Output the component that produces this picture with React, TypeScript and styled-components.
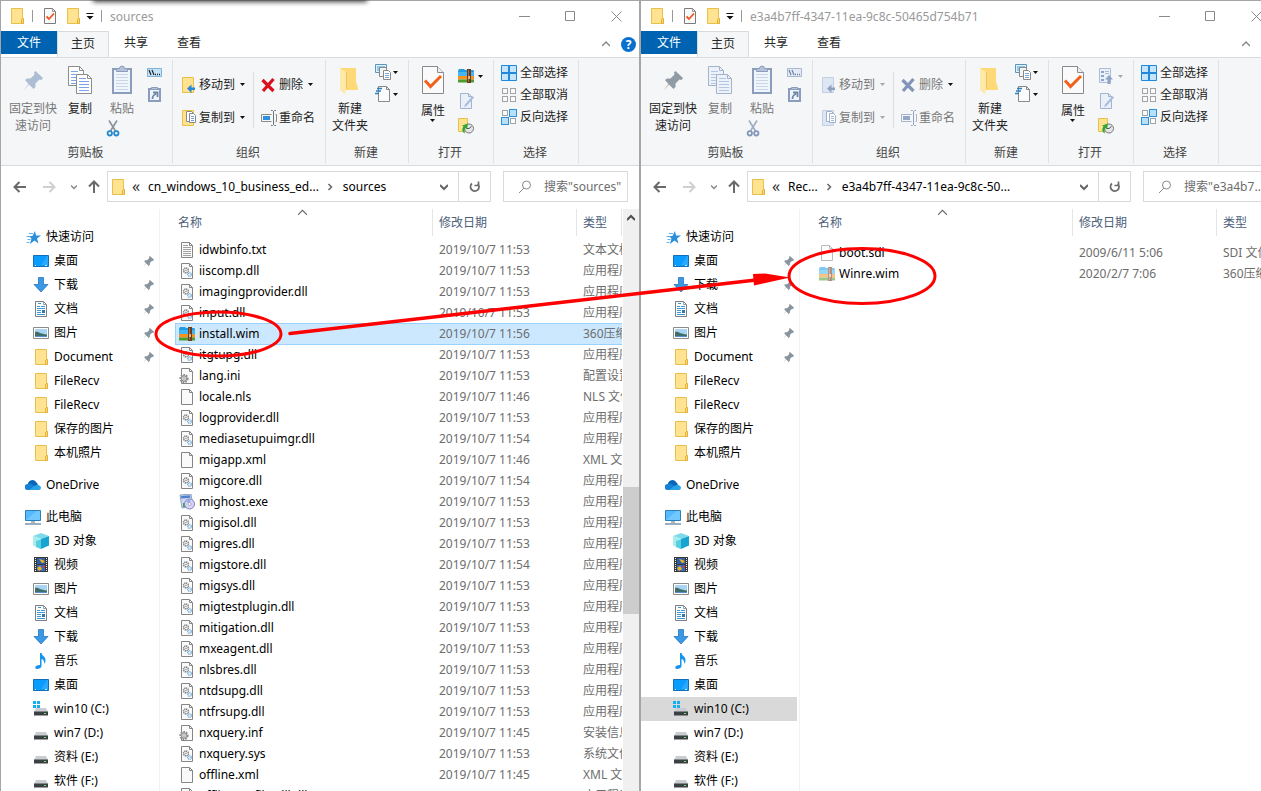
import React from "react";
import styled, { createGlobalStyle, css } from "styled-components";

const GlobalStyle = createGlobalStyle`
  * { box-sizing: border-box; }
  html, body { margin: 0; overflow: hidden; background: #fff; }
  body, button, input {
    font-family: "Noto Sans", "Noto Sans CJK SC", sans-serif;
    font-size: 12px;
    line-height: 17px;
    color: #000;
  }
  button { border: 0; background: none; padding: 0; margin: 0; }
  a { color: inherit; text-decoration: none; }
  svg { display: block; flex: none; }
`;

/* ---------- icons ---------- */

type IconProps = { off?: boolean };

const FolderIcon = () => (
  <svg width="16" height="16" viewBox="0 0 16 16">
    <path d="M2.5.5h11v10h1v5h-12z" fill="#ffe391" stroke="#e8c04a" />
    <path d="M12.5 15.5v-4l1-1h1v5z" fill="#ffd968" stroke="#e0b23c" />
  </svg>
);

const CheckPageIcon = () => (
  <svg width="16" height="16" viewBox="0 0 16 16">
    <path d="M2.5.5h8l3 3v12h-11z" fill="#fafafa" stroke="#7b7b7b" />
    <path d="M10.500.5v3h3" fill="none" stroke="#9a9a9a" />
    <path d="M4.500 8.500l2.500 2.500L12 5.500" fill="none" stroke="#f0541e" strokeWidth="1.800" />
  </svg>
);

const PropertiesIcon = () => (
  <svg width="22" height="30" viewBox="0 0 22 30">
    <path d="M.5 1.500h15l6 6v21h-21z" fill="#fafafa" stroke="#8a8a8a" />
    <path d="M15.500 1.500v6h6" fill="#ededed" stroke="#8a8a8a" />
    <path d="M3 15.500l5.500 6L19 11" fill="none" stroke="#f2601d" strokeWidth="3" />
  </svg>
);

const PinShape = "M12.500 0L20 7l-1.500 2-2-.5-4 4v3.500l-2 2-4.500-4.500L0 20l5.500-7L2 9l2-1.500h3.500l4-4-.5-2z";

const BigPinIcon = ({ off }: IconProps) => (
  <svg width="20" height="30" viewBox="0 -6 20 30">
    <path d={PinShape} fill={off ? "#adbdd3" : "#919ba3"} />
  </svg>
);

const SmallPinIcon = () => (
  <svg width="11" height="11" viewBox="0 0 20 20">
    <path d={PinShape} fill="#87939d" />
  </svg>
);

const CopyIcon = ({ off }: IconProps) => {
  const edge = off ? "#a4b3cc" : "#8c8c8c";
  const line = off ? "#b5c6e2" : "#7aa5e6";
  const paper = off ? "#edf2fa" : "#fff";
  return (
    <svg width="24" height="30" viewBox="0 0 24 30">
      <path d="M.5 1.500h11l4 4v15H.5z" fill={paper} stroke={edge} />
      <path d="M11.500 1.500v4h4" fill="none" stroke={edge} />
      <path d="M3 6.500h7M3 9.500h10M3 12.500h10M3 15.500h10M3 18.500h10" stroke={line} />
      <path d="M8.500 9.500h11l4 4v15h-15z" fill={paper} stroke={edge} />
      <path d="M19.500 9.500v4h4" fill="none" stroke={edge} />
      <path d="M11 13.500h7M11 16.500h10M11 19.500h10M11 22.500h10M11 25.500h10" stroke={line} />
    </svg>
  );
};

const PasteIcon = () => (
  <svg width="22" height="30" viewBox="0 0 22 30">
    <path d="M2 4h18v24H2z" fill="#f0f4fb" stroke="#8b9cbc" strokeWidth="2" />
    <path d="M5 9.500h12M5 12.500h12M5 15.500h12M5 18.500h12M5 21.500h12M5 24.500h12" stroke="#c9d6ea" />
    <path d="M5.500 6.500v-3h3a2.500 2.500 0 0 1 5 0h3v3z" fill="#b4c2da" stroke="#8b9cbc" />
  </svg>
);

const CopyPathIcon = ({ off }: IconProps) => (
  <svg width="16" height="16" viewBox="0 0 16 16">
    <path d="M.5 4.500h14v8H.5z" fill={off ? "#e3ebf6" : "#c4e3fa"} stroke={off ? "#a9b8d0" : "#7fb2d9"} />
    <path d="M2 6l2 5M5 6l2 5" stroke={off ? "#6f809e" : "#222"} strokeWidth="1.200" />
    <path d="M8 10.500h1M10 10.500h1M12 10.500h1" stroke={off ? "#6f809e" : "#222"} strokeWidth="1.400" />
  </svg>
);

const PasteLinkIcon = () => (
  <svg width="16" height="18" viewBox="0 0 16 18">
    <path d="M2 4h11v12H2z" fill="#f0f4fb" stroke="#8b9cbc" strokeWidth="2" />
    <path d="M4.500 4.500v-2h6v2z" fill="#b4c2da" stroke="#8b9cbc" />
    <path d="M5.500 14c0-3 .5-4 3.500-5M6 7.500h4.500V12" fill="none" stroke="#6e82a8" strokeWidth="1.800" />
  </svg>
);

const CutIcon = ({ off }: IconProps) => (
  <svg width="20" height="18" viewBox="0 0 20 18">
    <path d="M6 1.500l6.500 10.500M14 1.500L7.500 12" stroke={off ? "#9dadc6" : "#8a929b"} strokeWidth="1.600" />
    <circle cx="6.800" cy="14.300" r="2.200" fill="none" stroke={off ? "#8497b8" : "#2589cf"} strokeWidth="1.800" />
    <circle cx="13.300" cy="14.300" r="2.200" fill="none" stroke={off ? "#8497b8" : "#2589cf"} strokeWidth="1.800" />
  </svg>
);

const MoveToIcon = ({ off }: IconProps) => (
  <svg width="16" height="16" viewBox="0 0 16 16">
    <path d="M1.500.5h11v15h-11z" fill={off ? "#dde6f3" : "#ffe391"} stroke={off ? "#c3cfe2" : "#e8c04a"} />
    <path d="M6 11.500L10.500 7.500v3H14v2.500h-3.500v3z" fill={off ? "#8fa2c2" : "#2b88d8"} />
  </svg>
);

const CopyToIcon = ({ off }: IconProps) => {
  const edge = off ? "#a0b0ca" : "#888";
  return (
    <svg width="16" height="16" viewBox="0 0 16 16">
      <path d="M1.500.5h11v15h-11z" fill={off ? "#dde6f3" : "#ffe391"} stroke={off ? "#c3cfe2" : "#e8c04a"} />
      <path d="M5.500 1.500h5l2 2v8h-7z" fill="#fff" stroke={edge} />
      <path d="M8.500 3.500h4l2 2v7h-6z" fill="#fff" stroke={edge} />
      <path d="M10 6.500h3M10 8.500h3M10 10.500h3" stroke={off ? "#a4b8da" : "#6d9fe6"} />
    </svg>
  );
};

const DeleteIcon = ({ off }: IconProps) => (
  <svg width="16" height="16" viewBox="0 0 16 16">
    <path d="M1.500 3L12.500 14M12.500 2L2 14" stroke={off ? "#8295b8" : "#d9101e"} strokeWidth="3.200" />
  </svg>
);

const RenameIcon = ({ off }: IconProps) => (
  <svg width="16" height="16" viewBox="0 0 16 16">
    <path d="M10.500 4.500H.5v7h10M14.500 4.500h1v7h-1" fill="none" stroke={off ? "#a7b5cc" : "#8a8a8a"} />
    <path d="M2 6h7v4H2z" fill={off ? "#93a7c8" : "#2e8ee0"} />
    <path d="M12.500 1.500v13M10 .5h1.500l1 1 1-1H15M10 15.500h1.500l1-1 1 1H15" fill="none" stroke={off ? "#91a3c0" : "#6d747c"} />
  </svg>
);

const NewFolderIcon = () => (
  <svg width="22" height="30" viewBox="0 0 22 30">
    <path d="M1 3h16v14l2 6v2H1z" fill="#ffd978" />
    <path d="M1 3l6 4v17l-1 5-5-4z" fill="#ffe9a9" />
    <path d="M7 7h1v17H7z" fill="#f1c55c" />
  </svg>
);

const NewItemIcon = () => (
  <svg width="16" height="16" viewBox="0 0 16 16">
    <path d="M.5.5h11v8H.5z" fill="#dff1fb" stroke="#5c98b5" />
    <path d="M2 2h8v5H2z" fill="#8ecbea" />
    <path d="M4.500 3.500h7v9h-7z" fill="#f5f5f5" stroke="#888" />
    <path d="M8.500 6.500h5l2 2v7h-7z" fill="#fff" stroke="#888" />
    <path d="M10 9.500h4M10 11.500h4M10 13.500h4" stroke="#7ca9dd" />
  </svg>
);

const EasyAccessIcon = () => (
  <svg width="16" height="16" viewBox="0 0 16 16">
    <path d="M3.500.5h8l3 3v12h-11z" fill="#fafafa" stroke="#888" />
    <path d="M11.500.5v3h3" fill="none" stroke="#888" />
    <path d="M2 2.500h5M1 5h5M0 7.500h4" stroke="#2f7fbd" strokeWidth="1.500" />
  </svg>
);

const ArchiveIcon = ({ off }: IconProps) => (
  <svg width="16" height="16" viewBox="0 0 16 16" opacity={off ? 0.55 : 1}>
    <path d="M0 3l1-2h5l1 1h8l1 1v4H0z" fill="#1f9ce4" />
    <path d="M0 4h16v4.500H0z" fill="#46b6f0" />
    <path d="M0 8h16v3.500H0z" fill="#f6921e" />
    <path d="M0 11.500h16v3H0z" fill="#4d9a2d" />
    <path d="M9 1h4v14H9z" fill="#6b3a22" />
    <path d="M10.500 2v12" stroke="#a8714a" />
    <path d="M10 8h2v3h-2z" fill="#e0b98a" />
  </svg>
);

const OpenListIcon = () => (
  <svg width="16" height="16" viewBox="0 0 16 16">
    <path d="M1.500.5h11v14h-11z" fill="#eaf0f9" stroke="#aebdd5" />
    <path d="M3 3h3v2H3zM3 7h3v2H3zM3 11h3v2H3z" fill="#8ea3c7" />
    <path d="M7 3.500h4M7 5.500h4" stroke="#a9b9d4" />
    <path d="M11 7l4 4.500h-2.500V16h-3v-4.500H7z" fill="#8ea3c7" />
  </svg>
);

const EditIcon = () => (
  <svg width="16" height="16" viewBox="0 0 16 16">
    <path d="M2.500.5h8l3 3v12h-11z" fill="#eaf0fa" stroke="#a4b3cc" />
    <path d="M10.500.5v3h3" fill="none" stroke="#a4b3cc" />
    <path d="M14.500 3l1.500 1.500-7.500 8.500-2.500 1 1-2.500z" fill="#a9bbd9" />
  </svg>
);

const HistoryIcon = () => (
  <svg width="16" height="16" viewBox="0 0 16 16">
    <path d="M.5.5h9v13h-9z" fill="#ffe391" stroke="#e8c04a" />
    <circle cx="11" cy="10.500" r="4.500" fill="#e6e6e6" stroke="#777" />
    <path d="M11 10.500l2.500-2M9 10.500h2" stroke="#555" />
    <path d="M7 15.500c-3-1.500-3.500-4.500-1.500-7L4 7.500l6-2-1 6-1.500-1.500c-1.500 2-1 4-.5 5.500z" fill="#35a63c" />
  </svg>
);

const Tile = ({ x, y, on }: { x: number; y: number; on: boolean }) => (
  <rect x={x + 0.5} y={y + 0.5} width={on ? 7 : 5} height={on ? 7 : 5} fill={on ? "#b9e0fb" : "#fcfcfc"} stroke={on ? "#2d90dd" : "#a3a3a3"} />
);

const SelectAllIcon = () => (
  <svg width="16" height="16" viewBox="0 0 16 16">
    <path d="M.5.5h15v15H.5z" fill="#c4e5fc" stroke="#2189dc" />
    <path d="M8 0v16M0 8h16" stroke="#2189dc" strokeWidth="2" />
  </svg>
);

const SelectNoneIcon = () => (
  <svg width="16" height="16" viewBox="0 0 16 16">
    <Tile x={1} y={1} on={false} /><Tile x={9} y={1} on={false} />
    <Tile x={1} y={9} on={false} /><Tile x={9} y={9} on={false} />
  </svg>
);

const InvertIcon = () => (
  <svg width="16" height="16" viewBox="0 0 16 16">
    <Tile x={1} y={1} on={false} /><Tile x={8} y={0} on />
    <Tile x={0} y={8} on /><Tile x={9} y={9} on={false} />
  </svg>
);

const CaretIcon = ({ off }: IconProps) => (
  <svg width="5" height="3" viewBox="0 0 5 3">
    <path d="M0 0h5L2.500 3z" fill={off ? "#a8a8a8" : "#111"} />
  </svg>
);

const Chevron = ({ dir, size = 8, color = "#666", weight = 1.5 }: { dir: "up" | "down" | "right"; size?: number; color?: string; weight?: number }) => (
  <svg width={size} height={size} viewBox="0 0 8 8">
    <path
      d={dir === "up" ? "M0 6l4-4 4 4" : dir === "down" ? "M0 2l4 4 4-4" : "M2.500 1l3 3-3 3"}
      fill="none" stroke={color} strokeWidth={weight}
    />
  </svg>
);

const ArrowIcon = ({ turn, color }: { turn: number; color: string }) => (
  <svg width="14" height="14" viewBox="0 0 14 14">
    <path d="M1.500 7H13M6.500 2l-5 5 5 5" fill="none" stroke={color} strokeWidth="2" transform={`rotate(${turn} 7 7)`} />
  </svg>
);

const StarIcon = () => (
  <svg width="16" height="16" viewBox="0 0 16 16">
    <path d="M10 2l1 4.500h5l-4 3 1.500 5-4-3-4.500 3.500 1.500-5.500-3-2.500h4z" fill="#2a8fdb" />
    <path d="M4 4.500h4M1.500 7.500h4M2.500 10.500h3M1.500 13.500h3" stroke="#5fb4ee" />
  </svg>
);

const DesktopIcon = () => (
  <svg width="16" height="16" viewBox="0 0 16 16">
    <path d="M.5 2.500h15v11H.5z" fill="#0a9bff" stroke="#126fb5" />
    <path d="M8 12L14 3h1v9z" fill="#2aa8ff" />
    <path d="M2 12.500h1M12 12.500h2" stroke="#d4efff" />
  </svg>
);

const DownloadIcon = () => (
  <svg width="16" height="16" viewBox="0 0 16 16">
    <path d="M5.500.5h5v7h4.500l-7 7.500-7-7.500h4.500z" fill="#3a99e6" stroke="#2a79bd" strokeWidth=".8" />
  </svg>
);

const DocumentIcon = () => (
  <svg width="16" height="16" viewBox="0 0 16 16">
    <path d="M2.500.5h8l3 3v12h-11z" fill="#fdfdfd" stroke="#7f7f7f" />
    <path d="M10.500.5v3h3" fill="none" stroke="#9a9a9a" />
    <path d="M4 5.500h3M8 5.500h4M4 7.500h8M4 9.500h4M4 11.500h4M4 13.500h8" stroke="#3b9ad6" />
    <path d="M9 9h3v3H9z" fill="#2b7bb0" />
    <path d="M5 2.500h3" stroke="#3b9ad6" />
  </svg>
);

const PictureIcon = () => (
  <svg width="16" height="16" viewBox="0 0 16 16">
    <path d="M.5 2.500h15v11H.5z" fill="#fff" stroke="#8b8b8b" />
    <path d="M2 4h12v8H2z" fill="#a8d5f5" />
    <path d="M2 7c3-1 5 2 12 2.500V12H2z" fill="#3f6f6b" />
    <path d="M2 11h12v1H2z" fill="#5b8fc9" />
  </svg>
);

const OneDriveIcon = () => (
  <svg width="16" height="16" viewBox="0 0 16 16">
    <path d="M3 8a4.500 4.500 0 0 1 8.500-2.500A4 4 0 0 1 13 9L8 12z" fill="#0a64b8" />
    <path d="M3 13a3 3 0 0 1-.5-6C5 6 6.500 7 8.500 8.500L13 13z" fill="#1382d4" />
    <path d="M4 13l6-4.500c3-1.500 6 0 6 2.500a2.300 2.300 0 0 1-2.500 2z" fill="#29a4ea" />
  </svg>
);

const ComputerIcon = () => (
  <svg width="16" height="16" viewBox="0 0 16 16">
    <path d="M.5 1.500h15v10H.5z" fill="#55baff" stroke="#2c7fb9" />
    <path d="M1 11L12 2h3v9z" fill="#86d0ff" opacity=".6" />
    <path d="M6 12h4v2H6z" fill="#a8b7c4" />
    <path d="M0 15h16" stroke="#8093a5" strokeWidth="1.500" />
  </svg>
);

const CubeIcon = () => (
  <svg width="16" height="16" viewBox="0 0 16 16">
    <path d="M0 3l8-3 8 3-8 3z" fill="#7ddbe8" />
    <path d="M0 3l8 3v10l-8-3.500z" fill="#a6edf0" />
    <path d="M16 3L8 6v10l8-3.500z" fill="#16a5d2" />
    <path d="M3 8l5-1.500V16l-5-2z" fill="#59cfe0" />
  </svg>
);

const VideoIcon = () => (
  <svg width="16" height="16" viewBox="0 0 16 16">
    <path d="M1 0h14v15H1z" fill="#3a3a3a" />
    <path d="M2.500 1v14M13.500 1v14" stroke="#eee" strokeDasharray="1 1" />
    <path d="M4 1h8v6H4z" fill="#2f5ea8" />
    <path d="M4 8h8v6H4z" fill="#3a6cc0" />
    <path d="M6 2l4 1 2 2-3 1zM4 11l3-2 2 3-3 2z" fill="#f0b323" />
    <path d="M9 9h3v3z" fill="#c83c31" />
  </svg>
);

const MusicIcon = () => (
  <svg width="16" height="16" viewBox="0 0 16 16">
    <path d="M7 0h1.500c.5 3 4.500 3.500 4 8-.3 1.500-1 2-1.500 3 .5-3-.5-4.500-2.500-5v7c0 2-2.500 3-4.500 3-3 0-2-4.500 3-4z" fill="#1296ef" />
  </svg>
);

const DriveIcon = ({ system }: { system?: boolean }) => (
  <svg width="16" height="16" viewBox="0 0 16 16">
    <path d="M3 7h10l2 4H1z" fill="#c9cdd1" />
    <path d="M1 10.500h14v4H1z" fill="#3c4044" />
    <path d="M11 12h2v1h-2z" fill="#4ef06b" />
    {system && <path d="M0 0h3v3H0zM4 0h3v3H4zM0 4h3v3H0zM4 4h3v3H4z" fill="#12b0f0" />}
  </svg>
);

type FileKind = "txt" | "dll" | "ini" | "blank" | "exe" | "wim";

const FileIcon = ({ kind, faded }: { kind: FileKind; faded?: boolean }) => {
  if (kind === "wim") return <ArchiveIcon off={faded} />;
  if (kind === "exe")
    return (
      <svg width="16" height="16" viewBox="0 0 16 16">
        <path d="M1 1l11-1 2 12-11 2z" fill="#cdd9ee" stroke="#7e8fae" strokeWidth=".8" />
        <path d="M2 2l9-.8.4 2.500-9 .8z" fill="#4f7fd0" />
        <path d="M4 9h3v4H4z" fill="#3aa845" />
        <circle cx="10.500" cy="10" r="5" fill="#d8d4f2" stroke="#7b83c4" />
        <path d="M7 7l3.500 3 1-4.500z" fill="#8ea6f0" />
        <circle cx="10.500" cy="10" r="1.500" fill="#fff" stroke="#8a8fc0" strokeWidth=".7" />
      </svg>
    );
  return (
    <svg width="16" height="16" viewBox="0 0 16 16" opacity={faded ? 0.55 : 1}>
      <path d="M2.500.5h8l3 3v12h-11z" fill="#fafafa" stroke="#858585" />
      <path d="M10.500.5v3h3" fill="none" stroke="#858585" />
      {kind === "txt" && <path d="M4 3.500h5M4 5.500h8M4 7.500h8M4 9.500h8M4 11.500h8M4 13.500h8" stroke="#a2a2a2" />}
      {kind === "dll" && (
        <>
          <circle cx="7" cy="7.500" r="2.400" fill="#fff" stroke="#80858a" strokeWidth="1.600" strokeDasharray="1.200 .5" />
          <circle cx="7" cy="7.500" r=".7" fill="#777" />
          <circle cx="10.500" cy="11.500" r="1.800" fill="#e5f3fc" stroke="#7cb0d6" strokeWidth="1.400" strokeDasharray="1 .5" />
        </>
      )}
      {kind === "ini" && (
        <>
          <circle cx="5" cy="10.500" r="3.400" fill="#ddd" stroke="#8a8a8a" strokeWidth="2.400" strokeDasharray="1.500 1" />
          <circle cx="5" cy="10.500" r="2.700" fill="#dcdcdc" stroke="#8a8a8a" />
          <circle cx="5" cy="10.500" r="1" fill="#fff" stroke="#8a8a8a" strokeWidth=".6" />
        </>
      )}
    </svg>
  );
};

/* ---------- window frame ---------- */

const Screen = styled.div`
  position: relative;
  height: 100vh;
  overflow: hidden;
`;

const Desktop = styled.main`
  display: flex;
  height: 100%;
  margin-right: -19px;
`;

const Frame = styled.section`
  flex: 1 1 0;
  min-width: 0;
  display: flex;
  flex-direction: column;
  background: #fff;
  border: 1px solid #a5a5a5;
  border-bottom: 0;
`;

const TitleBar = styled.header`
  display: flex;
  align-items: center;
  height: 30px;
  padding-left: 8px;
`;

const QuickTools = styled.div`
  display: flex;
  align-items: center;
  gap: 7px;
`;

const CustomizeButton = styled.button`
  margin-left: -2px;
`;

const Rule = styled.span`
  width: 1px;
  height: 12px;
  margin-right: 2px;
  background: #999;
`;

const TitleText = styled.h1`
  flex: 1;
  margin: 0 0 0 6px;
  font-size: 12px;
  font-weight: 400;
  color: #999;
  white-space: nowrap;
`;

const CaptionButton = styled.button`
  width: 46px;
  height: 30px;
  display: grid;
  place-items: center;
`;

const TabRow = styled.nav`
  display: flex;
  height: 26px;
`;

const FileTab = styled.button`
  width: 56px;
  height: 23px;
  line-height: 23px;
  background: #0063b1;
  color: #fff;
`;

const Tab = styled.button<{ $active?: boolean }>`
  width: 52px;
  margin-right: 1px;
  height: 26px;
  line-height: 24px;
  padding-bottom: 2px;
  color: #262626;
  ${(p) =>
    p.$active &&
    css`
      height: 27px;
      background: #f5f6f7;
      border: 1px solid #dadbdc;
      border-bottom: 0;
    `}
`;

const TabTools = styled.div`
  margin-left: auto;
  display: flex;
  align-items: center;
  gap: 11px;
  padding-right: 3px;
`;

const HelpButton = styled.button`
  width: 15px;
  height: 15px;
  border-radius: 50%;
  background: #0a70d0;
  color: #fff;
  font-weight: 700;
  line-height: 15px;
`;

/* ---------- ribbon ---------- */

const Ribbon = styled.div`
  display: flex;
  height: 109px;
  padding: 2px 0;
  background: #f5f6f7;
  border: solid #dadbdc;
  border-width: 1px 0;
`;

const RibbonGroup = styled.section<{ $width: number }>`
  flex: 0 0 ${(p) => p.$width}px;
  display: flex;
  flex-direction: column;
  border-right: 1px solid #e0e1e2;
`;

const GroupBody = styled.div<{ $gap?: number; $pad?: number }>`
  flex: 1;
  display: flex;
  align-items: flex-start;
  gap: ${(p) => p.$gap ?? 6}px;
  padding: 4px 0 0 ${(p) => p.$pad ?? 8}px;
`;

const GroupLabel = styled.h2`
  margin: 0;
  padding-right: 2px;
  height: 20px;
  line-height: 20px;
  font-size: 12px;
  font-weight: 400;
  color: #444;
  text-align: center;
`;

const BigButton = styled.button<{ $width: number; $off?: boolean }>`
  width: ${(p) => p.$width}px;
  display: flex;
  flex-direction: column;
  align-items: center;
  gap: 5px;
  padding-top: 1px;
  color: ${(p) => (p.$off ? "#777" : "#222")};
`;

const CaretBelow = styled.span`
  display: flex;
  flex-direction: column;
  align-items: center;
  padding-top: 2px;
`;

const Stack = styled.div<{ $gap: number; $pad?: number }>`
  display: flex;
  flex-direction: column;
  align-items: flex-start;
  gap: ${(p) => p.$gap}px;
  padding-top: ${(p) => p.$pad ?? 0}px;
`;

const SmallButton = styled.button<{ $off?: boolean; $gap?: number }>`
  display: flex;
  align-items: center;
  gap: ${(p) => p.$gap ?? 2}px;
  min-height: 16px;
  white-space: nowrap;
  color: ${(p) => (p.$off ? "#777" : "#222")};
`;

const ButtonText = styled.span`
  margin-right: 3px;
`;

const Splitter = styled.span`
  width: 1px;
  height: 56px;
  margin: 8px 1px 0 2px;
  background: #dcdddf;
`;

/* ---------- address row ---------- */

const AddressRow = styled.div`
  display: flex;
  align-items: center;
  height: 43px;
  padding: 0 11px 2px 12px;
`;

const HistoryButtons = styled.div`
  display: flex;
  align-items: center;
  width: 94px;
  gap: 15px;
`;

const RecentButton = styled.button`
  margin-right: -5px;
`;

const AddressBox = styled.div`
  flex: 1;
  min-width: 0;
  height: 31px;
  display: flex;
  align-items: center;
  border: 1px solid #d9d9d9;
  padding-left: 2px;
`;

const Crumbs = styled.nav`
  flex: 1;
  display: flex;
  align-items: center;
  padding-left: 6px;
  white-space: nowrap;
`;

const Crumb = styled.a`
  margin: 0 7px 0 9px;
`;

const CrumbMark = styled.span`
  width: 7px;
  font-size: 16px;
  color: #333;
`;

const DropButton = styled.button`
  padding: 0 10px;
`;

const RefreshButton = styled.button`
  width: 32px;
  height: 29px;
  display: grid;
  place-items: center;
  border-left: 1px solid #d9d9d9;
`;

const SearchBox = styled.label`
  flex: 0 0 125px;
  margin-left: 12px;
  height: 31px;
  display: flex;
  align-items: center;
  gap: 12px;
  padding-left: 14px;
  border: 1px solid #d9d9d9;
  overflow: hidden;
`;

const SearchInput = styled.input`
  flex: 1;
  min-width: 0;
  border: 0;
  padding: 0;
  outline: 0;
  background: none;
  text-overflow: ellipsis;
  &::placeholder { color: #6d6d6d; opacity: 1; }
`;

/* ---------- body ---------- */

const Body = styled.div`
  flex: 1;
  min-height: 0;
  display: flex;
`;

const Sidebar = styled.nav`
  flex: 0 0 159px;
  padding: 16px 2px 0 0;
  border-right: 1px solid #f2f2f2;
  overflow: hidden;
`;

const Tree = styled.ul`
  list-style: none;
  margin: 0 0 8px;
  padding: 0;
`;

const TreeItem = styled.a<{ $level: number; $on?: boolean }>`
  display: flex;
  align-items: center;
  height: 24px;
  gap: 5px;
  padding-left: ${(p) => (p.$level ? 32 : 24)}px;
  padding-right: 3px;
  white-space: nowrap;
  background: ${(p) => (p.$on ? "#d9d9d9" : "none")};
`;

const TreeText = styled.span`
  flex: 1;
  line-height: 16px;
`;

const ListPane = styled.div`
  flex: 1;
  min-width: 0;
  overflow: hidden;
  padding-left: 15px;
`;

const FileTable = styled.table<{ $lead: number }>`
  width: 100%;
  table-layout: fixed;
  border-collapse: collapse;
  th, td { padding: 0; font-weight: 400; text-align: left; white-space: nowrap; overflow: hidden; }
  th { padding-bottom: ${(p) => p.$lead}px; }
`;

const NameCol = styled.col` width: 258px; `;
const DateCol = styled.col` width: 144px; `;

const HeadCell = styled.div<{ $pad: number }>`
  position: relative;
  height: 27px;
  line-height: 27px;
  padding-left: ${(p) => p.$pad}px;
  border-right: 1px solid #e5e5e5;
  color: #4c607a;
`;

const SortMark = styled.span`
  position: absolute;
  top: -1px;
  left: 50%;
  margin-left: -6px;
`;

const FileRow = styled.tr<{ $on?: boolean }>`
  height: 21px;
  ${(p) =>
    p.$on &&
    css`
      background: #cce8ff;
      box-shadow: inset 1px 1px #99d1ff, 0 1px #99d1ff;
    `}
`;

const NameCell = styled.div`
  display: flex;
  align-items: center;
  gap: 4px;
  height: 21px;
  padding-left: 4px;
`;

const MetaCell = styled.div`
  height: 21px;
  line-height: 21px;
  padding-left: 6px;
  color: #6d6d6d;
`;

const ScrollBar = styled.div`
  flex: 0 0 16px;
  display: flex;
  flex-direction: column;
  margin-left: 1px;
  background: #f0f0f0;
`;

const ScrollButton = styled.button`
  height: 17px;
  display: grid;
  place-items: center;
`;

const ScrollTrack = styled.div`
  flex: 1;
  display: grid;
  grid-template-rows: 261fr 127fr 177fr;
`;

const ScrollThumb = styled.div`
  grid-row: 2;
  background: #cdcdcd;
`;

/* ---------- overlays ---------- */

const CastShadow = styled.div`
  position: absolute;
  top: -4px;
  left: 94px;
  width: 272px;
  height: 4px;
  box-shadow: 0 1px 5px 1px #444;
`;

const Markup = styled.svg`
  position: absolute;
  top: 0;
  left: 0;
  pointer-events: none;
`;

/* ---------- data ---------- */

type FileEntry = { name: string; kind: FileKind; date: string; type: string; on?: boolean; faded?: boolean };

const f = (name: string, kind: FileKind, time: string, type = "应用程序扩展"): FileEntry => ({
  name, kind, type, date: `2019/10/7 ${time}`,
});

const sourceFiles: FileEntry[] = [
  f("idwbinfo.txt", "txt", "11:53", "文本文档"),
  f("iiscomp.dll", "dll", "11:53"),
  f("imagingprovider.dll", "dll", "11:53"),
  f("input.dll", "dll", "11:53"),
  { ...f("install.wim", "wim", "11:56", "360压缩 文件"), on: true },
  f("itgtupg.dll", "dll", "11:53"),
  f("lang.ini", "ini", "11:53", "配置设置"),
  f("locale.nls", "blank", "11:46", "NLS 文件"),
  f("logprovider.dll", "dll", "11:53"),
  f("mediasetupuimgr.dll", "dll", "11:54"),
  f("migapp.xml", "blank", "11:46", "XML 文档"),
  f("migcore.dll", "dll", "11:54"),
  f("mighost.exe", "exe", "11:53", "应用程序"),
  f("migisol.dll", "dll", "11:53"),
  f("migres.dll", "dll", "11:53"),
  f("migstore.dll", "dll", "11:54"),
  f("migsys.dll", "dll", "11:53"),
  f("migtestplugin.dll", "dll", "11:53"),
  f("mitigation.dll", "dll", "11:53"),
  f("mxeagent.dll", "dll", "11:53"),
  f("nlsbres.dll", "dll", "11:53"),
  f("ntdsupg.dll", "dll", "11:53"),
  f("ntfrsupg.dll", "dll", "11:53"),
  f("nxquery.inf", "ini", "11:45", "安装信息"),
  f("nxquery.sys", "dll", "11:53", "系统文件"),
  f("offline.xml", "blank", "11:45", "XML 文档"),
  f("offlineprofilesdll.dll", "dll", "11:53"),
];

const recoveryFiles: FileEntry[] = [
  { name: "boot.sdi", kind: "blank", date: "2009/6/11 5:06", type: "SDI 文件", faded: true },
  { name: "Winre.wim", kind: "wim", date: "2020/2/7 7:06", type: "360压缩 文件", faded: true },
];

type Place = { label: string; icon: React.ReactNode; pinned?: boolean };

const quick: Place[] = [
  { label: "桌面", icon: <DesktopIcon />, pinned: true },
  { label: "下载", icon: <DownloadIcon />, pinned: true },
  { label: "文档", icon: <DocumentIcon />, pinned: true },
  { label: "图片", icon: <PictureIcon />, pinned: true },
  { label: "Document", icon: <FolderIcon />, pinned: true },
  { label: "FileRecv", icon: <FolderIcon /> },
  { label: "FileRecv", icon: <FolderIcon /> },
  { label: "保存的图片", icon: <FolderIcon /> },
  { label: "本机照片", icon: <FolderIcon /> },
];

const computer: Place[] = [
  { label: "3D 对象", icon: <CubeIcon /> },
  { label: "视频", icon: <VideoIcon /> },
  { label: "图片", icon: <PictureIcon /> },
  { label: "文档", icon: <DocumentIcon /> },
  { label: "下载", icon: <DownloadIcon /> },
  { label: "音乐", icon: <MusicIcon /> },
  { label: "桌面", icon: <DesktopIcon /> },
  { label: "win10 (C:)", icon: <DriveIcon system /> },
  { label: "win7 (D:)", icon: <DriveIcon /> },
  { label: "资料 (E:)", icon: <DriveIcon /> },
  { label: "软件 (F:)", icon: <DriveIcon /> },
];

/* ---------- parts ---------- */

const TreeGroup = ({ head, items, selected }: { head: Place; items: Place[]; selected?: string }) => (
  <Tree>
    <li>
      <TreeItem href="#" $level={0}>{head.icon}<TreeText>{head.label}</TreeText></TreeItem>
    </li>
    {items.map((p, i) => (
      <li key={i}>
        <TreeItem href="#" $level={1} $on={p.label === selected}>
          {p.icon}<TreeText>{p.label}</TreeText>{p.pinned && <SmallPinIcon />}
        </TreeItem>
      </li>
    ))}
  </Tree>
);

/* "off" greys the commands that need a selected file */
const RibbonBar = ({ off }: { off: boolean }) => (
  <Ribbon>
    <RibbonGroup $width={172}>
      <GroupBody>
        <BigButton $width={48} $off={!off}><BigPinIcon off={!off} /><span>固定到快速访问</span></BigButton>
        <BigButton $width={34} $off={off}><CopyIcon off={off} />复制</BigButton>
        <Stack $gap={2}>
          <BigButton $width={38} $off><PasteIcon />粘贴</BigButton>
          <SmallButton aria-label="剪切"><CutIcon off={off} /></SmallButton>
        </Stack>
        <Stack $gap={5}>
          <SmallButton aria-label="复制路径"><CopyPathIcon off={off} /></SmallButton>
          <SmallButton aria-label="粘贴快捷方式"><PasteLinkIcon /></SmallButton>
        </Stack>
      </GroupBody>
      <GroupLabel>剪贴板</GroupLabel>
    </RibbonGroup>

    <RibbonGroup $width={153}>
      <GroupBody>
        <Stack $gap={16} $pad={12}>
          <SmallButton $off={off}><MoveToIcon off={off} /><ButtonText>移动到</ButtonText><CaretIcon off={off} /></SmallButton>
          <SmallButton $off={off}><CopyToIcon off={off} /><ButtonText>复制到</ButtonText><CaretIcon off={off} /></SmallButton>
        </Stack>
        <Splitter />
        <Stack $gap={16} $pad={12}>
          <SmallButton $off={off}><DeleteIcon off={off} /><ButtonText>删除</ButtonText><CaretIcon /></SmallButton>
          <SmallButton $off={off}><RenameIcon off={off} /><span>重命名</span></SmallButton>
        </Stack>
      </GroupBody>
      <GroupLabel>组织</GroupLabel>
    </RibbonGroup>

    <RibbonGroup $width={83}>
      <GroupBody $pad={4} $gap={5}>
        <BigButton $width={40}><NewFolderIcon /><span>新建<br />文件夹</span></BigButton>
        <Stack $gap={6}>
          <SmallButton aria-label="新建项目"><NewItemIcon /><CaretIcon /></SmallButton>
          <SmallButton aria-label="轻松访问"><EasyAccessIcon /><CaretIcon /></SmallButton>
        </Stack>
      </GroupBody>
      <GroupLabel>新建</GroupLabel>
    </RibbonGroup>

    <RibbonGroup $width={85}>
      <GroupBody $pad={7} $gap={8}>
        <BigButton $width={34}>
          <PropertiesIcon />
          <CaretBelow>属性<CaretIcon /></CaretBelow>
        </BigButton>
        <Stack $gap={9} $pad={4}>
          <SmallButton $gap={4} aria-label="打开">{off ? <OpenListIcon /> : <ArchiveIcon />}<CaretIcon off={off} /></SmallButton>
          <SmallButton aria-label="编辑"><EditIcon /></SmallButton>
          <SmallButton aria-label="历史记录"><HistoryIcon /></SmallButton>
        </Stack>
      </GroupBody>
      <GroupLabel>打开</GroupLabel>
    </RibbonGroup>

    <RibbonGroup $width={85}>
      <GroupBody $pad={7}>
        <Stack $gap={5}>
          <SmallButton $gap={3}><SelectAllIcon />全部选择</SmallButton>
          <SmallButton $gap={3}><SelectNoneIcon />全部取消</SmallButton>
          <SmallButton $gap={3}><InvertIcon />反向选择</SmallButton>
        </Stack>
      </GroupBody>
      <GroupLabel>选择</GroupLabel>
    </RibbonGroup>
  </Ribbon>
);

type ExplorerProps = {
  title: string;
  path: string[];
  files: FileEntry[];
  off: boolean;
  lead: number;
  selected?: string;
  scroll?: boolean;
};

const Explorer = ({ title, path, files, off, lead, selected, scroll }: ExplorerProps) => (
  <Frame>
    <TitleBar>
      <QuickTools>
        <FolderIcon />
        <Rule />
        <CheckPageIcon />
        <FolderIcon />
        <CustomizeButton aria-label="自定义快速访问工具栏">
          <svg width="8" height="8" viewBox="0 0 8 8"><path d="M.5 1.500h7" stroke="#111" /><path d="M.5 4h7L4 7.500z" fill="#111" /></svg>
        </CustomizeButton>
        <Rule />
      </QuickTools>
      <TitleText>{title}</TitleText>
      <CaptionButton aria-label="最小化"><svg width="11" height="11"><path d="M0 5.500h11" stroke="#8a8a8a" /></svg></CaptionButton>
      <CaptionButton aria-label="最大化"><svg width="11" height="11"><path d="M.5.5h9v9h-9z" fill="none" stroke="#8a8a8a" /></svg></CaptionButton>
      <CaptionButton aria-label="关闭"><svg width="11" height="11"><path d="M.5.5l10 10M10.500.5l-10 10" stroke="#8a8a8a" /></svg></CaptionButton>
    </TitleBar>
    <TabRow>
      <FileTab>文件</FileTab>
      <Tab $active>主页</Tab>
      <Tab>共享</Tab>
      <Tab>查看</Tab>
      <TabTools>
        <button aria-label="折叠功能区"><Chevron dir="up" color="#8a8a8a" /></button>
        <HelpButton aria-label="帮助">?</HelpButton>
      </TabTools>
    </TabRow>
    <RibbonBar off={off} />
    <AddressRow>
      <HistoryButtons>
        <button aria-label="后退"><ArrowIcon turn={0} color="#6a6a6a" /></button>
        <button aria-label="前进"><ArrowIcon turn={180} color="#d0d0d0" /></button>
        <RecentButton aria-label="最近位置"><Chevron dir="down" size={6} color="#888" weight={2} /></RecentButton>
        <button aria-label="上移"><ArrowIcon turn={90} color="#6a6a6a" /></button>
      </HistoryButtons>
      <AddressBox>
        <FolderIcon />
        <Crumbs>
          <CrumbMark>«</CrumbMark>
          <Crumb href="#">{path[0]}</Crumb>
          <Chevron dir="right" size={8} />
          <Crumb href="#">{path[1]}</Crumb>
        </Crumbs>
        <DropButton aria-label="历史位置"><Chevron dir="down" weight={2} /></DropButton>
        <RefreshButton aria-label="刷新">
          <svg width="12" height="12" viewBox="0 0 12 12">
            <path d="M3 2.500A4.300 4.300 0 1 0 8.800 2.700M5.500 4.500h4V.5" fill="none" stroke="#6a6a6a" strokeWidth="1.700" />
          </svg>
        </RefreshButton>
      </AddressBox>
      <SearchBox>
        <svg width="14" height="14" viewBox="0 0 14 14"><circle cx="8.500" cy="5" r="4" fill="none" stroke="#8a8a8a" /><path d="M6 8l-5 5" stroke="#8a8a8a" /></svg>
        <SearchInput type="text" aria-label="搜索" placeholder={`搜索"${title}"`} />
      </SearchBox>
    </AddressRow>
    <Body>
      <Sidebar>
        <TreeGroup head={{ label: "快速访问", icon: <StarIcon /> }} items={quick} />
        <TreeGroup head={{ label: "OneDrive", icon: <OneDriveIcon /> }} items={[]} />
        <TreeGroup head={{ label: "此电脑", icon: <ComputerIcon /> }} items={computer} selected={selected} />
      </Sidebar>
      <ListPane>
        <FileTable $lead={lead}>
          <colgroup><NameCol /><DateCol /><col /></colgroup>
          <thead>
            <tr>
              <th><HeadCell $pad={3}>名称<SortMark><Chevron dir="up" size={9} weight={1} /></SortMark></HeadCell></th>
              <th><HeadCell $pad={6}>修改日期</HeadCell></th>
              <th><HeadCell $pad={6}>类型</HeadCell></th>
            </tr>
          </thead>
          <tbody>
            {files.map((file) => (
              <FileRow key={file.name} $on={file.on}>
                <td><NameCell><FileIcon kind={file.kind} faded={file.faded} />{file.name}</NameCell></td>
                <td><MetaCell>{file.date}</MetaCell></td>
                <td><MetaCell>{file.type}</MetaCell></td>
              </FileRow>
            ))}
          </tbody>
        </FileTable>
      </ListPane>
      {scroll && (
        <ScrollBar>
          <ScrollButton aria-label="向上滚动"><Chevron dir="up" weight={2} color="#505050" /></ScrollButton>
          <ScrollTrack><ScrollThumb /></ScrollTrack>
        </ScrollBar>
      )}
    </Body>
  </Frame>
);

export default function App() {
  return (
    <Screen>
      <GlobalStyle />
      <Desktop>
        <Explorer
          title="sources"
          path={["cn_windows_10_business_ed...", "sources"]}
          files={sourceFiles}
          off={false}
          lead={3}
          scroll
        />
        <Explorer
          title="e3a4b7ff-4347-11ea-9c8c-50465d754b71"
          path={["Rec...", "e3a4b7ff-4347-11ea-9c8c-50..."]}
          files={recoveryFiles}
          off
          lead={6}
          selected="win10 (C:)"
        />
      </Desktop>
      <CastShadow />
      <Markup width="1261" height="791" viewBox="0 0 1261 791" fill="none" stroke="#f00" strokeWidth="3">
        <ellipse cx="218.500" cy="334" rx="62.500" ry="22" />
        <ellipse cx="862" cy="276" rx="73" ry="27.500" />
        <path d="M290 333.500L756 280" strokeWidth="3.500" strokeLinecap="round" />
        <path d="M753 274l12-.5 25 4-36 8z" fill="#f00" stroke="none" />
      </Markup>
    </Screen>
  );
}
